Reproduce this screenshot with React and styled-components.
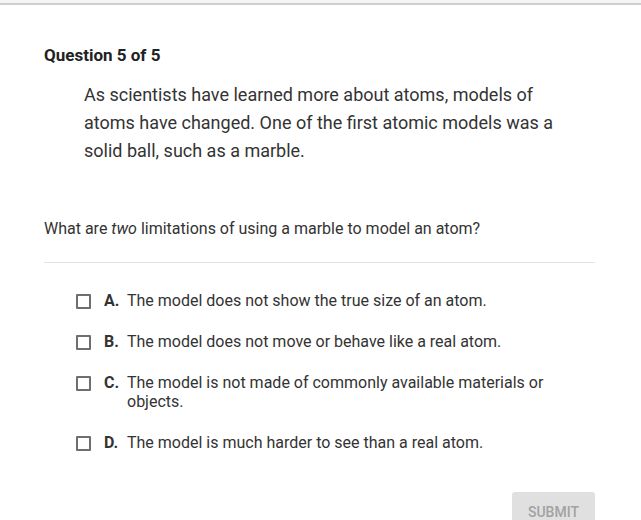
import React from 'react'
import styled, { createGlobalStyle } from 'styled-components'

const GlobalStyle = createGlobalStyle`
  body {
    margin: 0;
    background: #fff;
    font-family: Roboto, "Liberation Sans", sans-serif;
    color: #222;
  }
`;

const TopBar = styled.div`
  height: 3px;
  background: #f4f4f4;
  border-bottom: 2px solid #cfcfcf;
`;

const Page = styled.div`
  padding: 0 46px 0 44px;
`;

const Heading = styled.div`
  margin-top: 40px;
  font-size: 17px;
  font-weight: 700;
  color: #222;
  line-height: 20px;
`;

const Passage = styled.p`
  margin: 16px 0 0 40px;
  font-size: 18px;
  line-height: 28px;
  color: #333;
  max-width: 480px;
`;

const Prompt = styled.div`
  margin-top: 54px;
  font-size: 16px;
  line-height: 20px;
  color: #333;
  em { font-style: italic; }
`;

const Divider = styled.hr`
  border: 0;
  border-top: 1px solid #e3e3e3;
  margin: 23px 0 0;
`;

const Options = styled.div`
  display: flex;
  flex-direction: column;
  gap: 22px;
  margin-top: 28px;
  padding-left: 32px;
`;

const Option = styled.label`
  display: flex;
  align-items: flex-start;
  font-size: 16px;
  line-height: 19px;
  color: #333;
`;

const Box = styled.span`
  flex: none;
  width: 11px;
  height: 11px;
  border: 2px solid #6f6f6f;
  border-radius: 1px;
  margin-top: 3px;
  margin-right: 13px;
`;

const Letter = styled.span`
  flex: none;
  font-weight: 700;
  width: 23px;
`;

const Text = styled.span`
  max-width: 430px;
`;

const Footer = styled.div`
  display: flex;
  justify-content: flex-end;
  margin-top: 40px;
`;

const Submit = styled.button`
  width: 83px;
  height: 36px;
  border: 0;
  border-radius: 3px;
  background: #e0e0e0;
  color: #a2a2a2;
  font-family: Roboto, "Liberation Sans", sans-serif;
  font-size: 14px;
  font-weight: 500;
  padding: 3px 0 0;
`;

const options = [
  ['A.', 'The model does not show the true size of an atom.'],
  ['B.', 'The model does not move or behave like a real atom.'],
  ['C.', 'The model is not made of commonly available materials or objects.'],
  ['D.', 'The model is much harder to see than a real atom.'],
];

const App = () => {
  return (
    <>
      <GlobalStyle />
      <TopBar />
      <Page>
        <Heading>Question 5 of 5</Heading>
        <Passage>
          As scientists have learned more about atoms, models of atoms have
          changed. One of the first atomic models was a solid ball, such as a
          marble.
        </Passage>
        <Prompt>
          What are <em>two</em> limitations of using a marble to model an atom?
        </Prompt>
        <Divider />
        <Options>
          {options.map(([l, t]) => (
            <Option key={l}>
              <Box />
              <Letter>{l}</Letter>
              <Text>{t}</Text>
            </Option>
          ))}
        </Options>
        <Footer>
          <Submit>SUBMIT</Submit>
        </Footer>
      </Page>
    </>
  )
}

export default App
